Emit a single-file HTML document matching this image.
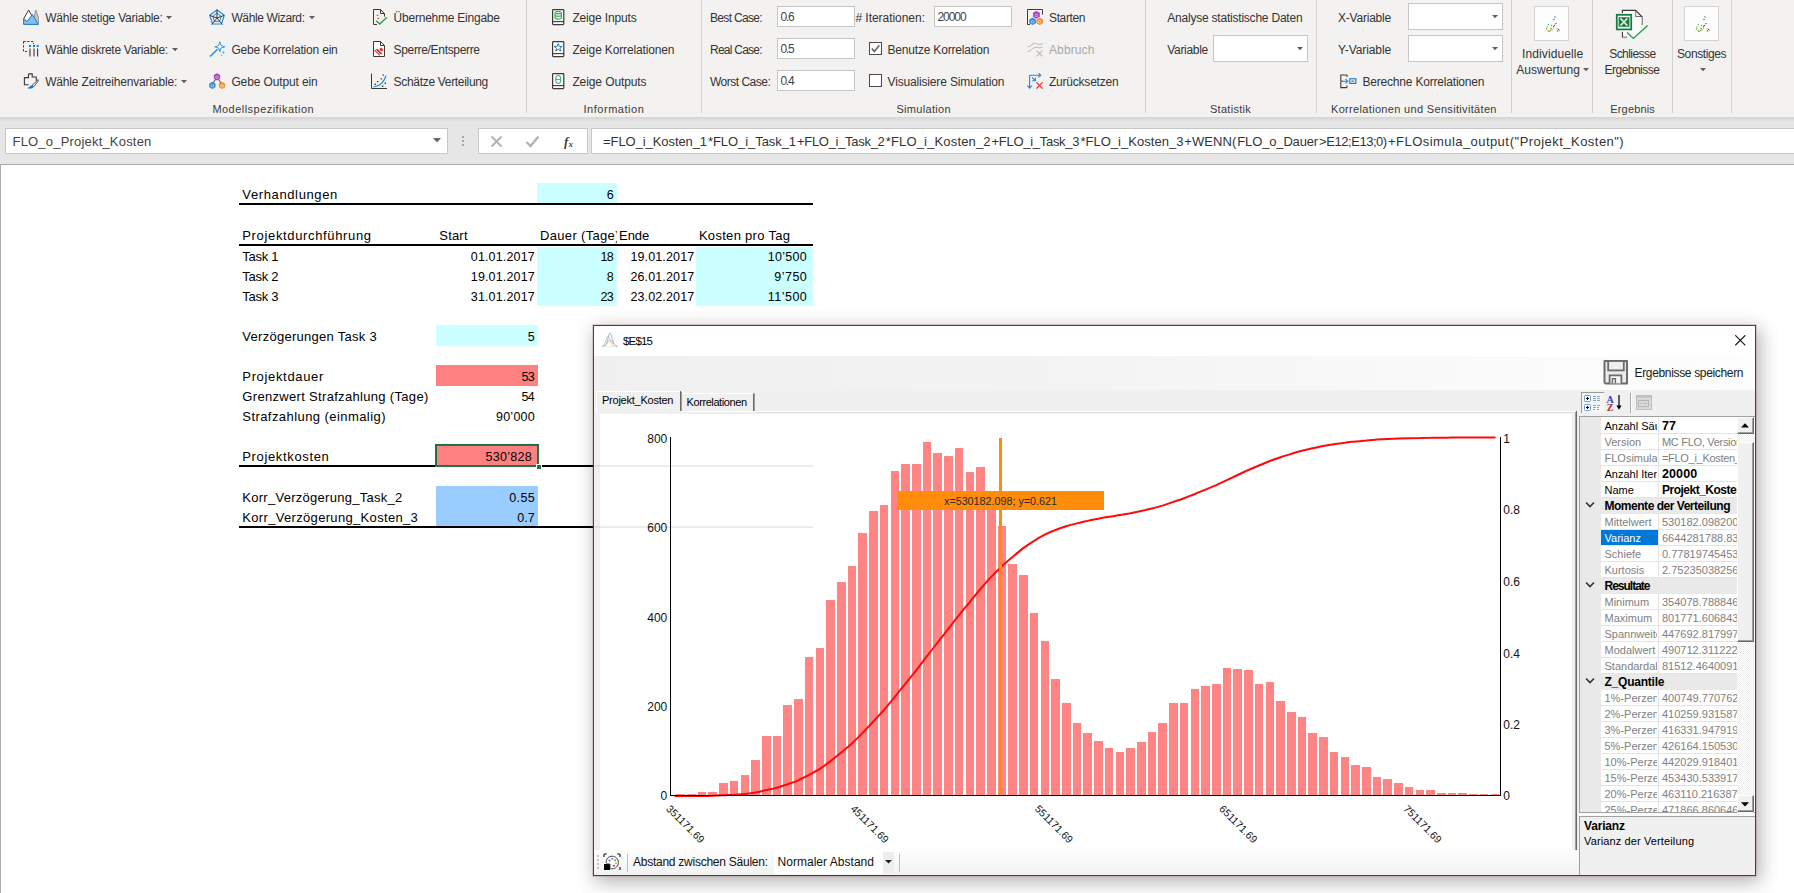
<!DOCTYPE html>
<html><head><meta charset="utf-8"><title>MC FLO</title>
<style>
html,body{margin:0;padding:0;}
body{width:1794px;height:893px;position:relative;overflow:hidden;background:#fff;font-family:"Liberation Sans",sans-serif;}
.t{position:absolute;white-space:pre;line-height:20px;font-family:"Liberation Sans",sans-serif;}
.r{position:absolute;box-sizing:border-box;}
</style></head><body>
<div class="r" style="left:0px;top:0px;width:1794px;height:117px;background:#f3f2f1;"></div>
<div class="r" style="left:0px;top:117px;width:1794px;height:47px;background:#e6e6e6;"></div>
<div class="r" style="left:0px;top:117px;width:1794px;height:5px;background:linear-gradient(#d4d4d4,#e6e6e6);"></div>
<div class="r" style="left:0px;top:164px;width:1794px;height:729px;background:#fff;border-top:1px solid #ababab;border-left:1px solid #ababab;"></div>
<div class="r" style="left:526px;top:0px;width:1px;height:113px;background:#d2d0ce;"></div>
<div class="r" style="left:701px;top:0px;width:1px;height:113px;background:#d2d0ce;"></div>
<div class="r" style="left:1145px;top:0px;width:1px;height:113px;background:#d2d0ce;"></div>
<div class="r" style="left:1316px;top:0px;width:1px;height:113px;background:#d2d0ce;"></div>
<div class="r" style="left:1511px;top:0px;width:1px;height:113px;background:#d2d0ce;"></div>
<div class="r" style="left:1592px;top:0px;width:1px;height:113px;background:#d2d0ce;"></div>
<div class="r" style="left:1672px;top:0px;width:1px;height:113px;background:#d2d0ce;"></div>
<div class="r" style="left:1731px;top:0px;width:1px;height:113px;background:#d2d0ce;"></div>
<span class="t" style="left:45.20px;top:8.00px;font-size:12px;color:#333333;letter-spacing:-0.219px;">Wähle stetige Variable:</span>
<svg class="r" style="left:165.5px;top:16px;" width="6" height="4" viewBox="0 0 6 4"><path d="M0 0H6L3 3.2Z" fill="#605e5c"/></svg>
<span class="t" style="left:45.20px;top:40.00px;font-size:12px;color:#333333;letter-spacing:-0.268px;">Wähle diskrete Variable:</span>
<svg class="r" style="left:171.7px;top:48px;" width="6" height="4" viewBox="0 0 6 4"><path d="M0 0H6L3 3.2Z" fill="#605e5c"/></svg>
<span class="t" style="left:45.20px;top:72.00px;font-size:12px;color:#333333;letter-spacing:-0.165px;">Wähle Zeitreihenvariable:</span>
<svg class="r" style="left:180.8px;top:80px;" width="6" height="4" viewBox="0 0 6 4"><path d="M0 0H6L3 3.2Z" fill="#605e5c"/></svg>
<span class="t" style="left:231.40px;top:8.00px;font-size:12px;color:#333333;letter-spacing:-0.368px;">Wähle Wizard:</span>
<svg class="r" style="left:309px;top:16px;" width="6" height="4" viewBox="0 0 6 4"><path d="M0 0H6L3 3.2Z" fill="#605e5c"/></svg>
<span class="t" style="left:231.40px;top:40.00px;font-size:12px;color:#333333;letter-spacing:-0.193px;">Gebe Korrelation ein</span>
<span class="t" style="left:231.40px;top:72.00px;font-size:12px;color:#333333;letter-spacing:-0.126px;">Gebe Output ein</span>
<span class="t" style="left:393.60px;top:8.00px;font-size:12px;color:#333333;letter-spacing:-0.230px;">Übernehme Eingabe</span>
<span class="t" style="left:393.60px;top:40.00px;font-size:12px;color:#333333;letter-spacing:-0.332px;">Sperre/Entsperre</span>
<span class="t" style="left:393.60px;top:72.00px;font-size:12px;color:#333333;letter-spacing:-0.316px;">Schätze Verteilung</span>
<span class="t" style="left:212.40px;top:99.00px;font-size:11px;color:#3a3a3a;letter-spacing:0.465px;">Modellspezifikation</span>
<span class="t" style="left:572.40px;top:8.00px;font-size:12px;color:#333333;letter-spacing:-0.158px;">Zeige Inputs</span>
<span class="t" style="left:572.40px;top:40.00px;font-size:12px;color:#333333;letter-spacing:-0.146px;">Zeige Korrelationen</span>
<span class="t" style="left:572.40px;top:72.00px;font-size:12px;color:#333333;letter-spacing:-0.098px;">Zeige Outputs</span>
<span class="t" style="left:583.50px;top:99.00px;font-size:11px;color:#3a3a3a;letter-spacing:0.527px;">Information</span>
<span class="t" style="left:710.00px;top:8.00px;font-size:12px;color:#333333;letter-spacing:-0.677px;">Best Case:</span>
<span class="t" style="left:710.00px;top:40.00px;font-size:12px;color:#333333;letter-spacing:-0.751px;">Real Case:</span>
<span class="t" style="left:710.00px;top:72.00px;font-size:12px;color:#333333;letter-spacing:-0.500px;">Worst Case:</span>
<div class="r" style="left:777px;top:6px;width:78px;height:21px;background:#fff;border:1px solid #c6c6c6;"></div>
<span class="t" style="left:780.40px;top:7.00px;font-size:12px;color:#444;letter-spacing:-1.191px;">0.6</span>
<div class="r" style="left:777px;top:38px;width:78px;height:21px;background:#fff;border:1px solid #c6c6c6;"></div>
<span class="t" style="left:780.40px;top:39.00px;font-size:12px;color:#444;letter-spacing:-1.191px;">0.5</span>
<div class="r" style="left:777px;top:70px;width:78px;height:21px;background:#fff;border:1px solid #c6c6c6;"></div>
<span class="t" style="left:780.40px;top:71.00px;font-size:12px;color:#444;letter-spacing:-1.191px;">0.4</span>
<span class="t" style="left:855.40px;top:8.00px;font-size:12px;color:#333333;letter-spacing:-0.035px;"># Iterationen:</span>
<div class="r" style="left:934px;top:6px;width:78px;height:21px;background:#fff;border:1px solid #c6c6c6;"></div>
<span class="t" style="left:937.40px;top:7.00px;font-size:12px;color:#444;letter-spacing:-1.018px;">20000</span>
<div class="r" style="left:869px;top:42px;width:13px;height:13px;background:#fff;border:1px solid #4a4a4a;"></div>
<svg class="r" style="left:869px;top:42px;" width="13" height="13" viewBox="0 0 13 13"><path d="M2.8 6.6L5.4 9.4L10.3 3.2" fill="none" stroke="#666" stroke-width="1.6"/></svg>
<span class="t" style="left:887.50px;top:40.00px;font-size:12px;color:#333333;letter-spacing:-0.189px;">Benutze Korrelation</span>
<div class="r" style="left:869px;top:74px;width:13px;height:13px;background:#fff;border:1px solid #4a4a4a;"></div>
<span class="t" style="left:887.50px;top:72.00px;font-size:12px;color:#333333;letter-spacing:-0.160px;">Visualisiere Simulation</span>
<span class="t" style="left:1049.00px;top:8.00px;font-size:12px;color:#333333;letter-spacing:-0.365px;">Starten</span>
<span class="t" style="left:1049.00px;top:40.00px;font-size:12px;color:#a8a8a8;letter-spacing:0.117px;">Abbruch</span>
<span class="t" style="left:1049.00px;top:72.00px;font-size:12px;color:#333333;letter-spacing:-0.221px;">Zurücksetzen</span>
<span class="t" style="left:896.40px;top:99.00px;font-size:11px;color:#3a3a3a;letter-spacing:0.315px;">Simulation</span>
<span class="t" style="left:1167.30px;top:8.00px;font-size:12px;color:#333333;letter-spacing:-0.218px;">Analyse statistische Daten</span>
<span class="t" style="left:1167.30px;top:40.00px;font-size:12px;color:#333333;letter-spacing:-0.320px;">Variable</span>
<div class="r" style="left:1213px;top:35px;width:95px;height:27px;background:#fff;border:1px solid #c6c6c6;"></div>
<svg class="r" style="left:1297.4px;top:47px;" width="6" height="4" viewBox="0 0 6 4"><path d="M0 0H6L3 3.2Z" fill="#605e5c"/></svg>
<span class="t" style="left:1210.00px;top:99.00px;font-size:11px;color:#3a3a3a;letter-spacing:0.286px;">Statistik</span>
<span class="t" style="left:1338.00px;top:8.00px;font-size:12px;color:#333333;letter-spacing:-0.216px;">X-Variable</span>
<span class="t" style="left:1338.00px;top:40.00px;font-size:12px;color:#333333;letter-spacing:-0.093px;">Y-Variable</span>
<div class="r" style="left:1408px;top:3px;width:95px;height:27px;background:#fff;border:1px solid #c6c6c6;"></div>
<svg class="r" style="left:1492.4px;top:15px;" width="6" height="4" viewBox="0 0 6 4"><path d="M0 0H6L3 3.2Z" fill="#605e5c"/></svg>
<div class="r" style="left:1408px;top:35px;width:95px;height:27px;background:#fff;border:1px solid #c6c6c6;"></div>
<svg class="r" style="left:1492.4px;top:47px;" width="6" height="4" viewBox="0 0 6 4"><path d="M0 0H6L3 3.2Z" fill="#605e5c"/></svg>
<span class="t" style="left:1362.40px;top:72.00px;font-size:12px;color:#333333;letter-spacing:-0.190px;">Berechne Korrelationen</span>
<span class="t" style="left:1331.00px;top:99.00px;font-size:11px;color:#3a3a3a;letter-spacing:0.328px;">Korrelationen und Sensitivitäten</span>
<div class="r" style="left:1534px;top:6px;width:35px;height:35px;background:#fdfdfd;border:1px solid #d6d4d2;"></div>
<span class="t" style="left:1522.00px;top:44.00px;font-size:12px;color:#333333;letter-spacing:0.114px;">Individuelle</span>
<span class="t" style="left:1516.20px;top:60.00px;font-size:12px;color:#333333;letter-spacing:0.048px;">Auswertung</span>
<svg class="r" style="left:1582.5px;top:68px;" width="6" height="4" viewBox="0 0 6 4"><path d="M0 0H6L3 3.2Z" fill="#605e5c"/></svg>
<span class="t" style="left:1609.20px;top:44.00px;font-size:12px;color:#333333;letter-spacing:-0.545px;">Schliesse</span>
<span class="t" style="left:1604.50px;top:60.00px;font-size:12px;color:#333333;letter-spacing:-0.515px;">Ergebnisse</span>
<span class="t" style="left:1610.30px;top:99.00px;font-size:11px;color:#3a3a3a;letter-spacing:0.155px;">Ergebnis</span>
<div class="r" style="left:1684px;top:6px;width:35px;height:35px;background:#fdfdfd;border:1px solid #d6d4d2;"></div>
<span class="t" style="left:1677.00px;top:44.00px;font-size:12px;color:#333333;letter-spacing:-0.388px;">Sonstiges</span>
<svg class="r" style="left:1699.5px;top:68px;" width="6" height="4" viewBox="0 0 6 4"><path d="M0 0H6L3 3.2Z" fill="#605e5c"/></svg>
<div class="r" style="left:5px;top:128px;width:443px;height:26px;background:#fff;border:1px solid #c8c8c8;"></div>
<span class="t" style="left:12.50px;top:131.50px;font-size:13px;color:#444;letter-spacing:0.193px;">FLO_o_Projekt_Kosten</span>
<svg class="r" style="left:433px;top:138px;" width="8" height="5" viewBox="0 0 8 5"><path d="M0 0H8L4 4.4Z" fill="#666"/></svg>
<div class="r" style="left:462px;top:136px;width:2px;height:2px;background:#a6a6a6;"></div>
<div class="r" style="left:462px;top:140px;width:2px;height:2px;background:#a6a6a6;"></div>
<div class="r" style="left:462px;top:144px;width:2px;height:2px;background:#a6a6a6;"></div>
<div class="r" style="left:478px;top:128px;width:110px;height:26px;background:#fff;border:1px solid #c8c8c8;"></div>
<svg class="r" style="left:490px;top:135px;" width="13" height="13" viewBox="0 0 13 13"><path d="M1.5 1.5L11.5 11.5M11.5 1.5L1.5 11.5" stroke="#b2b2b2" stroke-width="1.9" fill="none"/></svg>
<svg class="r" style="left:525px;top:135px;" width="15" height="13" viewBox="0 0 15 13"><path d="M1.5 7L5.5 11L13.5 1.5" stroke="#b2b2b2" stroke-width="2.3" fill="none"/></svg>
<span class="t" style="left:564.00px;top:131.50px;font-size:13px;color:#444;font-weight:bold;font-family:'Liberation Serif',serif;font-style:italic;">f</span>
<span class="t" style="left:568.50px;top:134.00px;font-size:9px;color:#444;font-weight:bold;font-family:'Liberation Serif',serif;font-style:italic;">x</span>
<div class="r" style="left:591px;top:128px;width:1210px;height:26px;background:#fff;border:1px solid #c8c8c8;"></div>
<span class="t" style="left:603.10px;top:131.50px;font-size:13px;color:#333;letter-spacing:-0.083px;">=FLO_i_Kosten_1</span>
<span class="t" style="left:708.00px;top:131.50px;font-size:13px;color:#333;letter-spacing:-0.065px;">*FLO_i_Task_1</span>
<span class="t" style="left:797.00px;top:131.50px;font-size:13px;color:#333;letter-spacing:-0.301px;">+FLO_i_Task_2</span>
<span class="t" style="left:885.70px;top:131.50px;font-size:13px;color:#333;letter-spacing:0.163px;">*FLO_i_Kosten_2</span>
<span class="t" style="left:991.50px;top:131.50px;font-size:13px;color:#333;letter-spacing:-0.285px;">+FLO_i_Task_3</span>
<span class="t" style="left:1080.40px;top:131.50px;font-size:13px;color:#333;letter-spacing:0.027px;">*FLO_i_Kosten_3</span>
<span class="t" style="left:1184.30px;top:131.50px;font-size:13px;color:#333;letter-spacing:0.092px;">+WENN(</span>
<span class="t" style="left:1237.30px;top:131.50px;font-size:13px;color:#333;letter-spacing:-0.148px;">FLO_o_Dauer</span>
<span class="t" style="left:1319.10px;top:131.50px;font-size:13px;color:#333;letter-spacing:-0.454px;">&gt;E12;E13;0)</span>
<span class="t" style="left:1388.10px;top:131.50px;font-size:13px;color:#333;letter-spacing:0.436px;">+FLOsimula_output</span>
<span class="t" style="left:1509.80px;top:131.50px;font-size:13px;color:#333;letter-spacing:0.461px;">("Projekt_Kosten")</span>
<div class="r" style="left:537px;top:183px;width:80px;height:21px;background:#ccffff;"></div>
<div class="r" style="left:537px;top:247px;width:80px;height:59px;background:#ccffff;"></div>
<div class="r" style="left:696px;top:247px;width:117px;height:59px;background:#ccffff;"></div>
<div class="r" style="left:436px;top:325px;width:102px;height:21px;background:#ccffff;"></div>
<div class="r" style="left:436px;top:365px;width:102px;height:21px;background:#ff8080;"></div>
<div class="r" style="left:436px;top:445px;width:102px;height:21px;background:#ff8080;"></div>
<div class="r" style="left:436px;top:486px;width:102px;height:40px;background:#99ccff;"></div>
<div class="r" style="left:239px;top:203px;width:574px;height:2px;background:#000;"></div>
<div class="r" style="left:239px;top:244px;width:574px;height:2px;background:#000;"></div>
<div class="r" style="left:239px;top:465px;width:360px;height:2px;background:#000;"></div>
<div class="r" style="left:239px;top:526px;width:360px;height:2px;background:#000;"></div>
<div class="r" style="left:435px;top:444px;width:104px;height:23px;border:2px solid #217346;"></div>
<div class="r" style="left:536px;top:464px;width:6px;height:6px;background:#217346;border:1px solid #fff;"></div>
<span class="t" style="left:242.30px;top:184.50px;font-size:13px;color:#000;letter-spacing:0.627px;">Verhandlungen</span>
<span class="t" style="left:606.65px;top:185.00px;font-size:12.5px;color:#000;">6</span>
<span class="t" style="left:242.30px;top:225.50px;font-size:13px;color:#000;letter-spacing:0.646px;">Projektdurchführung</span>
<span class="t" style="left:439.30px;top:225.50px;font-size:13px;color:#000;letter-spacing:0.186px;">Start</span>
<div class="r" style="left:540px;top:225px;width:76.5px;height:20px;overflow:hidden">
<span class="t" style="left:0.00px;top:0.50px;font-size:13px;color:#000;letter-spacing:0.330px;">Dauer (Tage)</span>
</div>
<span class="t" style="left:619.00px;top:225.50px;font-size:13px;color:#000;letter-spacing:-0.021px;">Ende</span>
<span class="t" style="left:698.90px;top:225.50px;font-size:13px;color:#000;letter-spacing:0.299px;">Kosten pro Tag</span>
<span class="t" style="left:242.30px;top:246.50px;font-size:13px;color:#000;letter-spacing:-0.274px;">Task 1</span>
<span class="t" style="left:470.80px;top:247.00px;font-size:12.5px;color:#000;letter-spacing:0.149px;">01.01.2017</span>
<span class="t" style="left:600.40px;top:247.00px;font-size:12.5px;color:#000;letter-spacing:-0.704px;">18</span>
<span class="t" style="left:630.40px;top:247.00px;font-size:12.5px;color:#000;letter-spacing:0.137px;">19.01.2017</span>
<span class="t" style="left:767.70px;top:247.00px;font-size:12.5px;color:#000;letter-spacing:0.312px;">10’500</span>
<span class="t" style="left:242.30px;top:266.50px;font-size:13px;color:#000;letter-spacing:-0.274px;">Task 2</span>
<span class="t" style="left:470.80px;top:267.00px;font-size:12.5px;color:#000;letter-spacing:0.149px;">19.01.2017</span>
<span class="t" style="left:606.65px;top:267.00px;font-size:12.5px;color:#000;">8</span>
<span class="t" style="left:630.40px;top:267.00px;font-size:12.5px;color:#000;letter-spacing:0.137px;">26.01.2017</span>
<span class="t" style="left:774.30px;top:267.00px;font-size:12.5px;color:#000;letter-spacing:0.479px;">9’750</span>
<span class="t" style="left:242.30px;top:286.50px;font-size:13px;color:#000;letter-spacing:-0.274px;">Task 3</span>
<span class="t" style="left:470.80px;top:287.00px;font-size:12.5px;color:#000;letter-spacing:0.149px;">31.01.2017</span>
<span class="t" style="left:600.40px;top:287.00px;font-size:12.5px;color:#000;letter-spacing:-0.704px;">23</span>
<span class="t" style="left:630.40px;top:287.00px;font-size:12.5px;color:#000;letter-spacing:0.137px;">23.02.2017</span>
<span class="t" style="left:767.70px;top:287.00px;font-size:12.5px;color:#000;letter-spacing:0.498px;">11’500</span>
<span class="t" style="left:242.30px;top:326.50px;font-size:13px;color:#000;letter-spacing:0.277px;">Verzögerungen Task 3</span>
<span class="t" style="left:527.75px;top:327.00px;font-size:12.5px;color:#000;">5</span>
<span class="t" style="left:242.30px;top:366.50px;font-size:13px;color:#000;letter-spacing:0.663px;">Projektdauer</span>
<span class="t" style="left:521.50px;top:367.00px;font-size:12.5px;color:#000;letter-spacing:-0.704px;">53</span>
<span class="t" style="left:242.30px;top:386.50px;font-size:13px;color:#000;letter-spacing:0.320px;">Grenzwert Strafzahlung (Tage)</span>
<span class="t" style="left:521.50px;top:387.00px;font-size:12.5px;color:#000;letter-spacing:-0.704px;">54</span>
<span class="t" style="left:242.30px;top:406.50px;font-size:13px;color:#000;letter-spacing:0.433px;">Strafzahlung (einmalig)</span>
<span class="t" style="left:496.00px;top:407.00px;font-size:12.5px;color:#000;letter-spacing:0.232px;">90’000</span>
<span class="t" style="left:242.30px;top:446.50px;font-size:13px;color:#000;letter-spacing:0.645px;">Projektkosten</span>
<span class="t" style="left:485.50px;top:447.00px;font-size:12.5px;color:#000;letter-spacing:0.285px;">530’828</span>
<span class="t" style="left:242.30px;top:487.50px;font-size:13px;color:#000;letter-spacing:0.276px;">Korr_Verzögerung_Task_2</span>
<span class="t" style="left:509.20px;top:488.00px;font-size:12.5px;color:#000;letter-spacing:0.390px;">0.55</span>
<span class="t" style="left:242.30px;top:507.50px;font-size:13px;color:#000;letter-spacing:0.326px;">Korr_Verzögerung_Kosten_3</span>
<span class="t" style="left:517.20px;top:508.00px;font-size:12.5px;color:#000;letter-spacing:0.062px;">0.7</span>
<div class="r" style="left:593px;top:325px;width:1163px;height:551px;background:#f0f0f0;border:1px solid #742c2c;box-shadow:0 0 0 1px rgba(116,44,44,0.16),3px 5px 18px 1px rgba(0,0,0,0.31);"></div>
<div class="r" style="left:594px;top:326px;width:1161px;height:30px;background:#fff;"></div>
<div class="r" style="left:594px;top:356px;width:1161px;height:34px;background:linear-gradient(90deg,#f0f0f0 0%,#f3f3f3 40%,#fbfbfb 80%,#fdfdfd 100%);"></div>
<span class="t" style="left:623.00px;top:331.00px;font-size:11.5px;color:#000;letter-spacing:-0.814px;">$E$15</span>
<svg class="r" style="left:601px;top:331px;" width="18" height="18" viewBox="0 0 18 18"><path opacity="0.8" d="M1 15C5 15 5 5 7 5S9 15 13 15" fill="none" stroke="#9bd19b" stroke-width="0.9"/><path d="M3 15C7 15 7 2 9 2S11 15 16 15" fill="none" stroke="#9aa8d8" stroke-width="0.9"/><path d="M1 15.5C6 15 7 9 9 9S12 15 17 15.5" fill="none" stroke="#e8a0a0" stroke-width="0.9"/><path d="M1 16H17" stroke="#ddd" stroke-width="0.6"/></svg>
<svg class="r" style="left:1735px;top:335px;" width="11" height="11" viewBox="0 0 11 11"><path d="M0.3 0.3L10.3 10.3M10.3 0.3L0.3 10.3" stroke="#111" stroke-width="1.1" fill="none"/></svg>
<svg class="r" style="left:1602px;top:359px;" width="27" height="27" viewBox="0 0 27 27"><path d="M2.5 2V23.4L3.6 24.6H25V2Z" fill="#ebebeb" stroke="#6c6c6c" stroke-width="2" stroke-linejoin="round"/><rect x="6.2" y="2" width="15.6" height="9.4" fill="#efeff3" stroke="#6c6c6c" stroke-width="1.8"/><path d="M7.6 24.4V16.4H19.4V24.4" fill="#f4f4f4" stroke="#6c6c6c" stroke-width="1.8"/><path d="M10.4 24.4V19.6H13.4V24.4" fill="none" stroke="#6c6c6c" stroke-width="1.4"/></svg>
<span class="t" style="left:1634.50px;top:363.00px;font-size:12px;color:#1a1a1a;letter-spacing:-0.337px;">Ergebnisse speichern</span>
<div class="r" style="left:596px;top:411px;width:980px;height:1px;background:#fff;"></div>
<div class="r" style="left:754px;top:412px;width:822px;height:1px;background:#e3e3e3;"></div>
<div class="r" style="left:596px;top:391px;width:84px;height:21px;background:#f0f0f0;border-top:1px solid #fff;border-left:1px solid #fff;"></div>
<div class="r" style="left:680px;top:391px;width:1px;height:20px;background:#696969;"></div>
<div class="r" style="left:681px;top:392px;width:1px;height:19px;background:#a0a0a0;"></div>
<div class="r" style="left:682px;top:393px;width:72px;height:18px;background:#f0f0f0;border-top:1px solid #fff;border-right:1px solid #696969;box-shadow:1px 0 0 #a0a0a0;"></div>
<span class="t" style="left:602.00px;top:390.00px;font-size:11px;color:#000;letter-spacing:-0.239px;">Projekt_Kosten</span>
<span class="t" style="left:686.50px;top:392.00px;font-size:11px;color:#000;letter-spacing:-0.411px;">Korrelationen</span>
<div class="r" style="left:1575px;top:412px;width:1px;height:438px;background:#a0a0a0;"></div>
<div class="r" style="left:1576px;top:411px;width:1px;height:440px;background:#696969;"></div>
<div class="r" style="left:600px;top:414px;width:972px;height:436px;background:#fff;"></div>
<div class="r" style="left:594px;top:850px;width:985px;height:25px;background:linear-gradient(#fdfdfd,#f2f2f2);"></div>
<div class="r" style="left:597px;top:855px;width:2px;height:2px;background:#c4c4c4;"></div>
<div class="r" style="left:597px;top:859px;width:2px;height:2px;background:#c4c4c4;"></div>
<div class="r" style="left:597px;top:863px;width:2px;height:2px;background:#c4c4c4;"></div>
<div class="r" style="left:597px;top:867px;width:2px;height:2px;background:#c4c4c4;"></div>
<div class="r" style="left:627px;top:854px;width:1px;height:18px;background:#c0c0c0;"></div>
<span class="t" style="left:633.00px;top:852.00px;font-size:12px;color:#111;letter-spacing:-0.250px;">Abstand zwischen Säulen:</span>
<div class="r" style="left:774px;top:851px;width:109px;height:23px;background:#fff;"></div>
<span class="t" style="left:777.50px;top:852.00px;font-size:12px;color:#111;letter-spacing:0.030px;">Normaler Abstand</span>
<div class="r" style="left:883px;top:852px;width:11px;height:21px;background:#ededed;"></div>
<svg class="r" style="left:885px;top:860px;" width="7" height="4" viewBox="0 0 7 4"><path d="M0 0H7L3.5 3.6Z" fill="#222"/></svg>
<div class="r" style="left:899px;top:854px;width:1px;height:18px;background:#c0c0c0;"></div>
<svg class="r" style="left:603px;top:853px;" width="18" height="18" viewBox="0 0 18 18"><path d="M1 1H4M1 1V4M17 1H14M17 1V4M17 17V14" stroke="#222" stroke-width="1.2" fill="none"/><rect x="1" y="11" width="6" height="6" fill="#000"/><path d="M9 3.2C5.4 3.2 3.2 5.8 3.2 8.8C3.2 10.2 4 11 5.2 11H7V14.6C7 15.4 7.8 15.8 9 15.8C12.6 15.8 15.4 13 15.4 9.4C15.4 5.8 12.6 3.2 9 3.2Z" fill="#fafafa" stroke="#333" stroke-width="0.9"/><circle cx="6.5" cy="7.5" r="1" fill="#8a4fd8"/><circle cx="9.3" cy="5.8" r="1" fill="#2e8be6"/><circle cx="12.2" cy="7.2" r="1" fill="#3cb44b"/><circle cx="13" cy="10.2" r="1" fill="#f5a623"/><circle cx="11" cy="12.8" r="1" fill="#e6332a"/></svg>
<svg class="r" style="left:600px;top:414px;font-family:'Liberation Sans',sans-serif" width="972" height="436" viewBox="600 414 972 436"><path d="M676 794H685V795H676ZM687 794H696V795H687ZM698 792H706V795H698ZM708 792H717V795H708ZM719 783H728V795H719ZM730 781H738V795H730ZM741 775H749V795H741ZM751 760H760V795H751ZM762 736H771V795H762ZM773 736H781V795H773ZM783 705H792V795H783ZM794 699H803V795H794ZM805 657H813V795H805ZM816 648H824V795H816ZM826 600H835V795H826ZM837 582H846V795H837ZM848 566H856V795H848ZM858 533H867V795H858ZM869 511H878V795H869ZM880 505H888V795H880ZM891 471H899V795H891ZM901 464H910V795H901ZM912 464H921V795H912ZM923 442H931V795H923ZM933 453H942V795H933ZM944 456H953V795H944ZM955 448H963V795H955ZM966 472H974V795H966ZM976 467H985V795H976ZM987 495H996V795H987ZM998 526H1006V795H998ZM1008 564H1017V795H1008ZM1019 575H1028V795H1019ZM1030 613H1038V795H1030ZM1041 641H1049V795H1041ZM1051 679H1060V795H1051ZM1062 703H1071V795H1062ZM1073 723H1081V795H1073ZM1083 733H1092V795H1083ZM1094 741H1103V795H1094ZM1105 748H1113V795H1105ZM1116 752H1124V795H1116ZM1126 748H1135V795H1126ZM1137 742H1146V795H1137ZM1148 732H1156V795H1148ZM1158 723H1167V795H1158ZM1169 703H1178V795H1169ZM1180 703H1188V795H1180ZM1191 689H1199V795H1191ZM1201 686H1210V795H1201ZM1212 684H1221V795H1212ZM1223 668H1231V795H1223ZM1233 669H1242V795H1233ZM1244 670H1253V795H1244ZM1255 684H1263V795H1255ZM1266 682H1274V795H1266ZM1276 701H1285V795H1276ZM1287 712H1296V795H1287ZM1298 717H1306V795H1298ZM1308 733H1317V795H1308ZM1319 737H1328V795H1319ZM1330 752H1338V795H1330ZM1341 757H1349V795H1341ZM1351 765H1360V795H1351ZM1362 767H1371V795H1362ZM1373 777H1381V795H1373ZM1383 779H1392V795H1383ZM1394 783H1403V795H1394ZM1405 787H1413V795H1405ZM1416 790H1424V795H1416ZM1426 790H1435V795H1426ZM1437 793H1446V795H1437ZM1448 793H1456V795H1448ZM1458 793H1467V795H1458ZM1469 794H1478V795H1469ZM1480 794H1488V795H1480ZM1491 794H1499V795H1491Z" fill="#ff8585" shape-rendering="crispEdges"/><path d="M675.5 796.2C676.3 796.2 677.9 796.2 680.5 796.1C683.1 796.1 687.6 796.1 691.2 796.1C694.8 796.1 698.3 796.0 701.9 796.0C705.5 795.9 709.1 795.9 712.6 795.8C716.2 795.7 719.8 795.5 723.3 795.3C726.9 795.1 730.5 795.0 734.1 794.8C737.6 794.5 741.2 794.3 744.8 793.9C748.3 793.6 751.9 793.2 755.5 792.5C759.1 791.9 762.6 790.9 766.2 790.1C769.8 789.4 773.3 788.8 776.9 787.8C780.5 786.8 784.1 785.4 787.6 784.2C791.2 782.9 794.8 781.9 798.3 780.3C801.9 778.7 805.5 776.7 809.1 774.8C812.6 772.9 816.2 771.2 819.8 768.9C823.3 766.6 826.9 763.8 830.5 761.1C834.1 758.3 837.6 755.5 841.2 752.5C844.8 749.6 848.3 746.6 851.9 743.4C855.5 740.1 859.1 736.5 862.6 732.9C866.2 729.2 869.8 725.3 873.3 721.5C876.9 717.6 880.5 714.0 884.1 709.9C887.6 705.8 891.2 701.3 894.8 696.9C898.3 692.5 901.9 688.0 905.5 683.6C909.1 679.2 912.6 674.9 916.2 670.4C919.8 665.8 923.3 660.9 926.9 656.2C930.5 651.6 934.1 647.1 937.6 642.5C941.2 638.0 944.8 633.5 948.3 628.9C951.9 624.4 955.5 619.5 959.1 615.0C962.6 610.6 966.2 606.4 969.8 602.1C973.3 597.8 976.9 593.1 980.5 589.0C984.1 584.8 987.6 580.7 991.2 576.9C994.8 573.1 998.3 569.5 1001.9 566.2C1005.5 562.8 1009.1 559.9 1012.6 556.9C1016.2 553.9 1019.8 550.8 1023.3 548.1C1026.9 545.4 1030.5 543.0 1034.1 540.8C1037.6 538.5 1041.2 536.4 1044.8 534.6C1048.3 532.8 1051.9 531.3 1055.5 530.0C1059.1 528.6 1062.6 527.4 1066.2 526.3C1069.8 525.2 1073.3 524.3 1076.9 523.4C1080.5 522.5 1084.1 521.7 1087.6 520.9C1091.2 520.1 1094.8 519.4 1098.3 518.7C1101.9 518.0 1105.5 517.4 1109.1 516.8C1112.6 516.2 1116.2 515.7 1119.8 515.1C1123.3 514.5 1126.9 513.8 1130.5 513.2C1134.1 512.5 1137.6 511.8 1141.2 511.0C1144.8 510.3 1148.3 509.4 1151.9 508.5C1155.5 507.6 1159.1 506.7 1162.6 505.6C1166.2 504.5 1169.8 503.2 1173.3 501.9C1176.9 500.7 1180.5 499.6 1184.1 498.2C1187.6 496.9 1191.2 495.4 1194.8 494.0C1198.3 492.5 1201.9 491.1 1205.5 489.6C1209.1 488.1 1212.6 486.7 1216.2 485.2C1219.8 483.6 1223.3 481.7 1226.9 480.1C1230.5 478.4 1234.1 476.7 1237.6 475.0C1241.2 473.3 1244.8 471.6 1248.3 470.0C1251.9 468.4 1255.5 467.0 1259.1 465.5C1262.6 464.0 1266.2 462.4 1269.8 461.0C1273.3 459.6 1276.9 458.4 1280.5 457.2C1284.1 456.0 1287.6 455.0 1291.2 453.9C1294.8 452.8 1298.3 451.7 1301.9 450.8C1305.5 449.8 1309.1 449.1 1312.6 448.3C1316.2 447.5 1319.8 446.6 1323.3 445.9C1326.9 445.3 1330.5 444.8 1334.1 444.2C1337.6 443.7 1341.2 443.1 1344.8 442.7C1348.3 442.2 1351.9 441.9 1355.5 441.5C1359.1 441.1 1362.6 440.7 1366.2 440.4C1369.8 440.0 1373.3 439.9 1376.9 439.6C1380.5 439.4 1384.1 439.2 1387.6 439.0C1391.2 438.8 1394.8 438.6 1398.3 438.5C1401.9 438.4 1405.5 438.3 1409.1 438.2C1412.6 438.1 1416.2 438.0 1419.8 438.0C1423.3 437.9 1426.9 437.8 1430.5 437.8C1434.1 437.7 1437.6 437.7 1441.2 437.7C1444.8 437.7 1448.3 437.6 1451.9 437.6C1455.5 437.6 1459.1 437.5 1462.6 437.5C1466.2 437.5 1469.8 437.5 1473.3 437.5C1476.9 437.5 1480.5 437.5 1484.1 437.4C1487.6 437.4 1493.0 437.4 1494.8 437.4" fill="none" stroke="#ff0a0a" stroke-width="2" stroke-linecap="round"/><path d="M670.5 437V795.5M670 795.5H1501M1500.5 437V796" stroke="#000" stroke-width="1" fill="none" shape-rendering="crispEdges"/><rect x="999" y="438" width="3" height="357" fill="#ff8c0a"/><rect x="897" y="491" width="207" height="19" fill="#ff8c0a"/><text x="1000.5" y="504.6" font-size="11" text-anchor="middle" fill="#2a2a2a" textLength="113" lengthAdjust="spacingAndGlyphs">x=530182.098; y=0.621</text><text x="667.3" y="443.3" font-size="12" text-anchor="end" fill="#111">800</text><text x="667.3" y="531.8" font-size="12" text-anchor="end" fill="#111">600</text><text x="667.3" y="622.0" font-size="12" text-anchor="end" fill="#111">400</text><text x="667.3" y="711.3" font-size="12" text-anchor="end" fill="#111">200</text><text x="667.3" y="800.3" font-size="12" text-anchor="end" fill="#111">0</text><text x="1503.3" y="443.3" font-size="12" fill="#111">1</text><text x="1503.3" y="514.3" font-size="12" fill="#111">0.8</text><text x="1503.3" y="586.3" font-size="12" fill="#111">0.6</text><text x="1503.3" y="657.8" font-size="12" fill="#111">0.4</text><text x="1503.3" y="729.3" font-size="12" fill="#111">0.2</text><text x="1503.3" y="799.9" font-size="12" fill="#111">0</text><text transform="translate(665.6 809.4) rotate(45)" x="0" y="0" font-size="10.5" fill="#111">351171.69</text><text transform="translate(849.9 809.4) rotate(45)" x="0" y="0" font-size="10.5" fill="#111">451171.69</text><text transform="translate(1034.2 809.4) rotate(45)" x="0" y="0" font-size="10.5" fill="#111">551171.69</text><text transform="translate(1218.5 809.4) rotate(45)" x="0" y="0" font-size="10.5" fill="#111">651171.69</text><text transform="translate(1402.8 809.4) rotate(45)" x="0" y="0" font-size="10.5" fill="#111">751171.69</text></svg>
<div class="r" style="left:594px;top:465px;width:219px;height:2px;background:rgba(0,0,0,0.075);"></div>
<div class="r" style="left:594px;top:526px;width:219px;height:2px;background:rgba(0,0,0,0.075);"></div>
<div class="r" style="left:1581px;top:392px;width:23px;height:21px;background:#f5f5f5;border-top:1px solid #9a9a9a;border-left:1px solid #9a9a9a;"></div>
<svg class="r" style="left:1583px;top:394px;" width="20" height="18" viewBox="0 0 20 18"><rect x="1.5" y="1.5" width="6" height="6" rx="1" fill="#fff" stroke="#6f9fd8" stroke-width="1"/><path d="M3.0 4.5H6.0M4.5 3.0V6.0" stroke="#000" stroke-width="1"/><rect x="1.5" y="10.5" width="6" height="6" rx="1" fill="#fff" stroke="#6f9fd8" stroke-width="1"/><path d="M3.0 13.5H6.0M4.5 12.0V15.0" stroke="#000" stroke-width="1"/><path d="M10 2.5H13M14 2.5H17M10 4.5H13M14 4.5H17M10 6.5H13M14 6.5H17M10 11.5H13M14 11.5H17M10 13.5H13M14 13.5H16M10 15.5H12M14 15.5H16" stroke="#8aa4c4" stroke-width="1"/></svg>
<span class="t" style="left:1606.50px;top:389.50px;font-size:10px;color:#2a3fb0;font-weight:bold;font-family:'Liberation Serif',serif;">A</span>
<span class="t" style="left:1606.80px;top:397.50px;font-size:10px;color:#a83232;font-weight:bold;font-family:'Liberation Serif',serif;">Z</span>
<svg class="r" style="left:1615px;top:394px;" width="8" height="17" viewBox="0 0 8 17"><path d="M4 1V14" stroke="#000" stroke-width="1.2"/><path d="M1.4 11.6H6.6L4 15.8Z" fill="#000"/></svg>
<div class="r" style="left:1630px;top:393px;width:1px;height:20px;background:#a8a8a8;"></div>
<div class="r" style="left:1631px;top:393px;width:1px;height:20px;background:#fff;"></div>
<svg class="r" style="left:1636px;top:395px;" width="16" height="15" viewBox="0 0 16 15"><rect x="0.5" y="0.5" width="15" height="14" fill="#d9d9d9" stroke="#bdbdbd"/><rect x="0.5" y="0.5" width="15" height="2.4" fill="#c4c4c4"/><rect x="2.5" y="5.5" width="10" height="6" fill="none" stroke="#b6b6b6"/><path d="M4 8.5H5.5M7 8.5H11" stroke="#bbb"/></svg>
<div class="r" style="left:1579px;top:416px;width:176px;height:397px;background:#fff;border-top:1px solid #a0a0a0;border-left:1px solid #a0a0a0;"></div>
<div class="r" style="left:1580px;top:417px;width:21px;height:396px;background:#e9e9e9;"></div>
<div class="r" style="left:1580px;top:417px;width:158px;height:396px;overflow:hidden">
<div class="r" style="left:21px;top:16px;width:137px;height:1px;background:#e4e4e4;"></div>
<div class="r" style="left:78px;top:1px;width:1px;height:16px;background:#e4e4e4;"></div>
<div class="r" style="left:21px;top:1px;width:56px;height:15px;overflow:hidden">
<span class="t" style="left:3.50px;top:-2.00px;font-size:11px;color:#000;">Anzahl Säulen</span>
</div>
<div class="r" style="left:79px;top:1px;width:79px;height:15px;overflow:hidden">
<span class="t" style="left:3.00px;top:-2.00px;font-size:12.5px;color:#000;font-weight:bold;letter-spacing:0.1px;">77</span>
</div>
<div class="r" style="left:21px;top:32px;width:137px;height:1px;background:#e4e4e4;"></div>
<div class="r" style="left:78px;top:17px;width:1px;height:16px;background:#e4e4e4;"></div>
<div class="r" style="left:21px;top:17px;width:56px;height:15px;overflow:hidden">
<span class="t" style="left:3.50px;top:-2.00px;font-size:11px;color:#808080;">Version</span>
</div>
<div class="r" style="left:79px;top:17px;width:79px;height:15px;overflow:hidden">
<span class="t" style="left:3.00px;top:-2.00px;font-size:11px;color:#808080;letter-spacing:-0.3px;">MC FLO, Version 5</span>
</div>
<div class="r" style="left:21px;top:48px;width:137px;height:1px;background:#e4e4e4;"></div>
<div class="r" style="left:78px;top:33px;width:1px;height:16px;background:#e4e4e4;"></div>
<div class="r" style="left:21px;top:33px;width:56px;height:15px;overflow:hidden">
<span class="t" style="left:3.50px;top:-2.00px;font-size:11px;color:#808080;">FLOsimula_output</span>
</div>
<div class="r" style="left:79px;top:33px;width:79px;height:15px;overflow:hidden">
<span class="t" style="left:3.00px;top:-2.00px;font-size:11px;color:#808080;letter-spacing:-0.3px;">=FLO_i_Kosten_1*F</span>
</div>
<div class="r" style="left:21px;top:64px;width:137px;height:1px;background:#e4e4e4;"></div>
<div class="r" style="left:78px;top:49px;width:1px;height:16px;background:#e4e4e4;"></div>
<div class="r" style="left:21px;top:49px;width:56px;height:15px;overflow:hidden">
<span class="t" style="left:3.50px;top:-2.00px;font-size:11px;color:#000;">Anzahl Iterationen</span>
</div>
<div class="r" style="left:79px;top:49px;width:79px;height:15px;overflow:hidden">
<span class="t" style="left:3.00px;top:-2.00px;font-size:12.5px;color:#000;font-weight:bold;letter-spacing:0.1px;">20000</span>
</div>
<div class="r" style="left:21px;top:80px;width:137px;height:1px;background:#e4e4e4;"></div>
<div class="r" style="left:78px;top:65px;width:1px;height:16px;background:#e4e4e4;"></div>
<div class="r" style="left:21px;top:65px;width:56px;height:15px;overflow:hidden">
<span class="t" style="left:3.50px;top:-2.00px;font-size:11px;color:#000;">Name</span>
</div>
<div class="r" style="left:79px;top:65px;width:79px;height:15px;overflow:hidden">
<span class="t" style="left:3.00px;top:-2.00px;font-size:12px;color:#000;font-weight:bold;letter-spacing:-0.5px;">Projekt_Kosten</span>
</div>
<div class="r" style="left:0px;top:81px;width:158px;height:16px;background:#e9e9e9;"></div>
<svg class="r" style="left:5px;top:84px;" width="10" height="8" viewBox="0 0 10 8"><path d="M1 1.5L5 5.5L9 1.5" fill="none" stroke="#333" stroke-width="1.6"/></svg>
<span class="t" style="left:24.50px;top:79.00px;font-size:12px;color:#000;letter-spacing:-0.478px;font-weight:bold;">Momente der Verteilung</span>
<div class="r" style="left:21px;top:112px;width:137px;height:1px;background:#e4e4e4;"></div>
<div class="r" style="left:78px;top:97px;width:1px;height:16px;background:#e4e4e4;"></div>
<div class="r" style="left:21px;top:97px;width:56px;height:15px;overflow:hidden">
<span class="t" style="left:3.50px;top:-2.00px;font-size:11px;color:#808080;">Mittelwert</span>
</div>
<div class="r" style="left:79px;top:97px;width:79px;height:15px;overflow:hidden">
<span class="t" style="left:3.00px;top:-2.00px;font-size:11px;color:#808080;">530182.098200</span>
</div>
<div class="r" style="left:21px;top:128px;width:137px;height:1px;background:#e4e4e4;"></div>
<div class="r" style="left:78px;top:113px;width:1px;height:16px;background:#e4e4e4;"></div>
<div class="r" style="left:21px;top:113px;width:57px;height:15px;background:#0078d7;"></div>
<div class="r" style="left:21px;top:113px;width:56px;height:15px;overflow:hidden">
<span class="t" style="left:3.50px;top:-2.00px;font-size:11px;color:#fff;">Varianz</span>
</div>
<div class="r" style="left:79px;top:113px;width:79px;height:15px;overflow:hidden">
<span class="t" style="left:3.00px;top:-2.00px;font-size:11px;color:#808080;">6644281788.83</span>
</div>
<div class="r" style="left:21px;top:144px;width:137px;height:1px;background:#e4e4e4;"></div>
<div class="r" style="left:78px;top:129px;width:1px;height:16px;background:#e4e4e4;"></div>
<div class="r" style="left:21px;top:129px;width:56px;height:15px;overflow:hidden">
<span class="t" style="left:3.50px;top:-2.00px;font-size:11px;color:#808080;">Schiefe</span>
</div>
<div class="r" style="left:79px;top:129px;width:79px;height:15px;overflow:hidden">
<span class="t" style="left:3.00px;top:-2.00px;font-size:11px;color:#808080;">0.77819745453</span>
</div>
<div class="r" style="left:21px;top:160px;width:137px;height:1px;background:#e4e4e4;"></div>
<div class="r" style="left:78px;top:145px;width:1px;height:16px;background:#e4e4e4;"></div>
<div class="r" style="left:21px;top:145px;width:56px;height:15px;overflow:hidden">
<span class="t" style="left:3.50px;top:-2.00px;font-size:11px;color:#808080;">Kurtosis</span>
</div>
<div class="r" style="left:79px;top:145px;width:79px;height:15px;overflow:hidden">
<span class="t" style="left:3.00px;top:-2.00px;font-size:11px;color:#808080;">2.75235038256</span>
</div>
<div class="r" style="left:0px;top:161px;width:158px;height:16px;background:#e9e9e9;"></div>
<svg class="r" style="left:5px;top:164px;" width="10" height="8" viewBox="0 0 10 8"><path d="M1 1.5L5 5.5L9 1.5" fill="none" stroke="#333" stroke-width="1.6"/></svg>
<span class="t" style="left:24.50px;top:159.00px;font-size:12px;color:#000;letter-spacing:-1.002px;font-weight:bold;">Resultate</span>
<div class="r" style="left:21px;top:192px;width:137px;height:1px;background:#e4e4e4;"></div>
<div class="r" style="left:78px;top:177px;width:1px;height:16px;background:#e4e4e4;"></div>
<div class="r" style="left:21px;top:177px;width:56px;height:15px;overflow:hidden">
<span class="t" style="left:3.50px;top:-2.00px;font-size:11px;color:#808080;">Minimum</span>
</div>
<div class="r" style="left:79px;top:177px;width:79px;height:15px;overflow:hidden">
<span class="t" style="left:3.00px;top:-2.00px;font-size:11px;color:#808080;">354078.788846</span>
</div>
<div class="r" style="left:21px;top:208px;width:137px;height:1px;background:#e4e4e4;"></div>
<div class="r" style="left:78px;top:193px;width:1px;height:16px;background:#e4e4e4;"></div>
<div class="r" style="left:21px;top:193px;width:56px;height:15px;overflow:hidden">
<span class="t" style="left:3.50px;top:-2.00px;font-size:11px;color:#808080;">Maximum</span>
</div>
<div class="r" style="left:79px;top:193px;width:79px;height:15px;overflow:hidden">
<span class="t" style="left:3.00px;top:-2.00px;font-size:11px;color:#808080;">801771.606843</span>
</div>
<div class="r" style="left:21px;top:224px;width:137px;height:1px;background:#e4e4e4;"></div>
<div class="r" style="left:78px;top:209px;width:1px;height:16px;background:#e4e4e4;"></div>
<div class="r" style="left:21px;top:209px;width:56px;height:15px;overflow:hidden">
<span class="t" style="left:3.50px;top:-2.00px;font-size:11px;color:#808080;">Spannweite</span>
</div>
<div class="r" style="left:79px;top:209px;width:79px;height:15px;overflow:hidden">
<span class="t" style="left:3.00px;top:-2.00px;font-size:11px;color:#808080;">447692.817997</span>
</div>
<div class="r" style="left:21px;top:240px;width:137px;height:1px;background:#e4e4e4;"></div>
<div class="r" style="left:78px;top:225px;width:1px;height:16px;background:#e4e4e4;"></div>
<div class="r" style="left:21px;top:225px;width:56px;height:15px;overflow:hidden">
<span class="t" style="left:3.50px;top:-2.00px;font-size:11px;color:#808080;">Modalwert</span>
</div>
<div class="r" style="left:79px;top:225px;width:79px;height:15px;overflow:hidden">
<span class="t" style="left:3.00px;top:-2.00px;font-size:11px;color:#808080;">490712.311222</span>
</div>
<div class="r" style="left:21px;top:256px;width:137px;height:1px;background:#e4e4e4;"></div>
<div class="r" style="left:78px;top:241px;width:1px;height:16px;background:#e4e4e4;"></div>
<div class="r" style="left:21px;top:241px;width:56px;height:15px;overflow:hidden">
<span class="t" style="left:3.50px;top:-2.00px;font-size:11px;color:#808080;">Standardabweichung</span>
</div>
<div class="r" style="left:79px;top:241px;width:79px;height:15px;overflow:hidden">
<span class="t" style="left:3.00px;top:-2.00px;font-size:11px;color:#808080;">81512.4640091</span>
</div>
<div class="r" style="left:0px;top:257px;width:158px;height:16px;background:#e9e9e9;"></div>
<svg class="r" style="left:5px;top:260px;" width="10" height="8" viewBox="0 0 10 8"><path d="M1 1.5L5 5.5L9 1.5" fill="none" stroke="#333" stroke-width="1.6"/></svg>
<span class="t" style="left:24.50px;top:255.00px;font-size:12px;color:#000;letter-spacing:-0.223px;font-weight:bold;">Z_Quantile</span>
<div class="r" style="left:21px;top:288px;width:137px;height:1px;background:#e4e4e4;"></div>
<div class="r" style="left:78px;top:273px;width:1px;height:16px;background:#e4e4e4;"></div>
<div class="r" style="left:21px;top:273px;width:56px;height:15px;overflow:hidden">
<span class="t" style="left:3.50px;top:-2.00px;font-size:11px;color:#808080;">1%-Perzentil</span>
</div>
<div class="r" style="left:79px;top:273px;width:79px;height:15px;overflow:hidden">
<span class="t" style="left:3.00px;top:-2.00px;font-size:11px;color:#808080;">400749.770762</span>
</div>
<div class="r" style="left:21px;top:304px;width:137px;height:1px;background:#e4e4e4;"></div>
<div class="r" style="left:78px;top:289px;width:1px;height:16px;background:#e4e4e4;"></div>
<div class="r" style="left:21px;top:289px;width:56px;height:15px;overflow:hidden">
<span class="t" style="left:3.50px;top:-2.00px;font-size:11px;color:#808080;">2%-Perzentil</span>
</div>
<div class="r" style="left:79px;top:289px;width:79px;height:15px;overflow:hidden">
<span class="t" style="left:3.00px;top:-2.00px;font-size:11px;color:#808080;">410259.931587</span>
</div>
<div class="r" style="left:21px;top:320px;width:137px;height:1px;background:#e4e4e4;"></div>
<div class="r" style="left:78px;top:305px;width:1px;height:16px;background:#e4e4e4;"></div>
<div class="r" style="left:21px;top:305px;width:56px;height:15px;overflow:hidden">
<span class="t" style="left:3.50px;top:-2.00px;font-size:11px;color:#808080;">3%-Perzentil</span>
</div>
<div class="r" style="left:79px;top:305px;width:79px;height:15px;overflow:hidden">
<span class="t" style="left:3.00px;top:-2.00px;font-size:11px;color:#808080;">416331.947919</span>
</div>
<div class="r" style="left:21px;top:336px;width:137px;height:1px;background:#e4e4e4;"></div>
<div class="r" style="left:78px;top:321px;width:1px;height:16px;background:#e4e4e4;"></div>
<div class="r" style="left:21px;top:321px;width:56px;height:15px;overflow:hidden">
<span class="t" style="left:3.50px;top:-2.00px;font-size:11px;color:#808080;">5%-Perzentil</span>
</div>
<div class="r" style="left:79px;top:321px;width:79px;height:15px;overflow:hidden">
<span class="t" style="left:3.00px;top:-2.00px;font-size:11px;color:#808080;">426164.150530</span>
</div>
<div class="r" style="left:21px;top:352px;width:137px;height:1px;background:#e4e4e4;"></div>
<div class="r" style="left:78px;top:337px;width:1px;height:16px;background:#e4e4e4;"></div>
<div class="r" style="left:21px;top:337px;width:56px;height:15px;overflow:hidden">
<span class="t" style="left:3.50px;top:-2.00px;font-size:11px;color:#808080;">10%-Perzentil</span>
</div>
<div class="r" style="left:79px;top:337px;width:79px;height:15px;overflow:hidden">
<span class="t" style="left:3.00px;top:-2.00px;font-size:11px;color:#808080;">442029.918401</span>
</div>
<div class="r" style="left:21px;top:368px;width:137px;height:1px;background:#e4e4e4;"></div>
<div class="r" style="left:78px;top:353px;width:1px;height:16px;background:#e4e4e4;"></div>
<div class="r" style="left:21px;top:353px;width:56px;height:15px;overflow:hidden">
<span class="t" style="left:3.50px;top:-2.00px;font-size:11px;color:#808080;">15%-Perzentil</span>
</div>
<div class="r" style="left:79px;top:353px;width:79px;height:15px;overflow:hidden">
<span class="t" style="left:3.00px;top:-2.00px;font-size:11px;color:#808080;">453430.533917</span>
</div>
<div class="r" style="left:21px;top:384px;width:137px;height:1px;background:#e4e4e4;"></div>
<div class="r" style="left:78px;top:369px;width:1px;height:16px;background:#e4e4e4;"></div>
<div class="r" style="left:21px;top:369px;width:56px;height:15px;overflow:hidden">
<span class="t" style="left:3.50px;top:-2.00px;font-size:11px;color:#808080;">20%-Perzentil</span>
</div>
<div class="r" style="left:79px;top:369px;width:79px;height:15px;overflow:hidden">
<span class="t" style="left:3.00px;top:-2.00px;font-size:11px;color:#808080;">463110.216387</span>
</div>
<div class="r" style="left:21px;top:400px;width:137px;height:1px;background:#e4e4e4;"></div>
<div class="r" style="left:78px;top:385px;width:1px;height:16px;background:#e4e4e4;"></div>
<div class="r" style="left:21px;top:385px;width:56px;height:15px;overflow:hidden">
<span class="t" style="left:3.50px;top:-2.00px;font-size:11px;color:#808080;">25%-Perzentil</span>
</div>
<div class="r" style="left:79px;top:385px;width:79px;height:15px;overflow:hidden">
<span class="t" style="left:3.00px;top:-2.00px;font-size:11px;color:#808080;">471866.860646</span>
</div>
</div>
<div class="r" style="left:1579px;top:812px;width:176px;height:1px;background:#a0a0a0;"></div>
<div class="r" style="left:1737px;top:417px;width:17px;height:396px;background:#f8f8f8;background-image:repeating-conic-gradient(#ffffff 0% 25%, #ededed 0% 50%);background-size:2px 2px;"></div>
<div class="r" style="left:1737px;top:417px;width:17px;height:17px;background:#f0f0f0;border-top:1px solid #fff;border-left:1px solid #fff;border-right:1px solid #696969;border-bottom:1px solid #696969;box-shadow:inset -1px -1px 0 #a0a0a0;"></div>
<svg class="r" style="left:1741px;top:422.5px;" width="8" height="5" viewBox="0 0 8 5"><path d="M0 4.5H8L4 0.3Z" fill="#000"/></svg>
<div class="r" style="left:1737px;top:442px;width:17px;height:200px;background:#f0f0f0;border-top:1px solid #fff;border-left:1px solid #fff;border-right:1px solid #696969;border-bottom:1px solid #696969;box-shadow:inset -1px -1px 0 #a0a0a0;"></div>
<div class="r" style="left:1737px;top:795px;width:17px;height:17px;background:#f0f0f0;border-top:1px solid #fff;border-left:1px solid #fff;border-right:1px solid #696969;border-bottom:1px solid #696969;box-shadow:inset -1px -1px 0 #a0a0a0;"></div>
<svg class="r" style="left:1741px;top:802px;" width="8" height="5" viewBox="0 0 8 5"><path d="M0 0.3H8L4 4.5Z" fill="#000"/></svg>
<div class="r" style="left:1579px;top:813px;width:176px;height:3px;background:#fbfbfb;"></div>
<div class="r" style="left:1579px;top:816px;width:176px;height:59px;background:#f0f0f0;border-top:1px solid #a0a0a0;border-left:1px solid #a0a0a0;"></div>
<span class="t" style="left:1584.00px;top:816.00px;font-size:12px;color:#000;letter-spacing:-0.171px;font-weight:bold;">Varianz</span>
<span class="t" style="left:1584.00px;top:831.00px;font-size:11px;color:#000;letter-spacing:0.123px;">Varianz der Verteilung</span>
<svg class="r" style="left:23px;top:9px;" width="16" height="16" viewBox="0 0 16 16"><path d="M9.5 14.5L12.8 1L15.5 8.5V14.5Z" fill="#c8c6c4" stroke="#8a8886" stroke-width="0.8"/><path d="M0.6 10L5.6 1L10.5 9.5" fill="#fff" stroke="#3b3a39" stroke-width="1"/><path d="M0.6 15.4V9.6L4 12.6L9.4 5.6L15.4 15.4Z" fill="#83beec" stroke="#1e78c8" stroke-width="1"/></svg>
<svg class="r" style="left:23px;top:41px;" width="16" height="16" viewBox="0 0 16 16"><path d="M0.5 0.5H10.5V3M0.5 0.5V10.5H4" fill="none" stroke="#3b3a39" stroke-width="1" stroke-dasharray="2.2 1.6"/><path d="M6 4H8V6H6ZM10 4H12V6H10ZM13.6 4H15.6V6H13.6Z" fill="#1e78c8"/><path d="M7 7.6V15.6M11 7.6V15.6M14.6 7.6V15.6" stroke="#3b3a39" stroke-width="1.1"/></svg>
<svg class="r" style="left:23px;top:73px;" width="16" height="16" viewBox="0 0 16 16"><path d="M5.5 0.9H9.2V4H13.3V8M5.5 0.9V4.6H1.4V11.8H5.6" fill="none" stroke="#3b3a39" stroke-width="1.1"/><path d="M15.2 6.6L9 12.4L10.6 13.8L15.8 7.4Z" fill="#fff" stroke="#3b3a39" stroke-width="0.9"/><path d="M9 12.2C7 12.2 6.6 14.6 4 15C6.4 16.2 10.2 15.8 10.6 13.6Z" fill="#1e78c8"/></svg>
<svg class="r" style="left:209px;top:9px;" width="17" height="17" viewBox="0 0 17 17"><path d="M8 1L15.3 6.3L12.5 15H3.5L0.7 6.3Z" fill="none" stroke="#1e8ad6" stroke-width="1.2"/><path d="M8 4.2L12.2 7.3L10.6 12.4H5.4L3.8 7.3Z" fill="none" stroke="#1e8ad6" stroke-width="1"/><path d="M8 0.5V9M8 9L1 6.5M8 9L15 6.5M8 9L2.6 15.6M8 9L13.4 15.6" stroke="#3b3a39" stroke-width="1" fill="none"/></svg>
<svg class="r" style="left:209px;top:41px;" width="17" height="17" viewBox="0 0 17 17"><path d="M1 15.6L8.6 8.2" stroke="#1e8ad6" stroke-width="1.4"/><path d="M10.8 0.8L12 4.6L15.8 5.8L12 7L10.8 10.8L9.6 7L5.8 5.8L9.6 4.6Z" fill="#fff" stroke="#1e8ad6" stroke-width="0.9"/><path d="M14.4 9.6L14.9 10.9L16.2 11.4L14.9 11.9L14.4 13.2L13.9 11.9L12.6 11.4L13.9 10.9Z" fill="#5aa9e6"/><path d="M12.6 13.2L13 14L13.8 14.4L13 14.8L12.6 15.6L12.2 14.8L11.4 14.4L12.2 14Z" fill="#5aa9e6"/></svg>
<svg class="r" style="left:209px;top:73px;" width="17" height="17" viewBox="0 0 17 17"><path d="M8 4L3.5 11M8 4L12.5 11" stroke="#3b3a39" stroke-width="1"/><path d="M8 0.19999999999999973L11.13 1.9999999999999998V5.6L8 7.4L4.87 5.6V1.9999999999999998Z" fill="#a743b8"/><path d="M6.8 3.1999999999999997H9.2V5.4H6.8Z" fill="none" stroke="#fff" stroke-opacity="0.75" stroke-width="0.6"/><path d="M3.4 8.8L6.53 10.6V14.200000000000001L3.4 16.0L0.27 14.200000000000001V10.6Z" fill="#2e8bd8"/><path d="M2.2 11.8H4.6V14.0H2.2Z" fill="none" stroke="#fff" stroke-opacity="0.75" stroke-width="0.6"/><path d="M13 8.8L16.13 10.6V14.200000000000001L13 16.0L9.87 14.200000000000001V10.6Z" fill="#f09231"/><path d="M11.8 11.8H14.2V14.0H11.8Z" fill="none" stroke="#fff" stroke-opacity="0.75" stroke-width="0.6"/></svg>
<svg class="r" style="left:373px;top:9px;" width="17" height="17" viewBox="0 0 17 17"><path d="M4 15.5H0.5V0.5H7.5L11.5 4.5V7.6" fill="none" stroke="#3b3a39" stroke-width="1"/><path d="M7.5 0.5V4.5H11.5" fill="none" stroke="#3b3a39" stroke-width="1"/><path d="M3.6 5.8h1.8v1h-1.8zM4.4 9h1.8v1h-1.8z" fill="#e8312f"/><path d="M3.2 11.8L6.8 15L13.9 8.2" fill="none" stroke="#21a04a" stroke-width="1.3"/></svg>
<svg class="r" style="left:373px;top:41px;" width="17" height="17" viewBox="0 0 17 17"><path d="M0.5 0.5H7.5L11.5 4.5V15.5H0.5Z" fill="#fdfdfd" stroke="#3b3a39" stroke-width="1"/><path d="M7.5 0.5V4.5H11.5" fill="none" stroke="#3b3a39" stroke-width="1"/><path d="M1.6 9L6.8 14.4M4.2 8.4L8.8 13" stroke="#e8312f" stroke-width="1.1"/><path d="M3.2 8.2L8 13.2" stroke="#3b3a39" stroke-width="1"/><path d="M6.4 8.2L8 6.4L9.8 8V10.2H7.8Z" fill="#e8312f"/></svg>
<svg class="r" style="left:371px;top:73px;" width="17" height="17" viewBox="0 0 17 17"><path d="M0.5 0.5V15.5H16" fill="none" stroke="#3b3a39" stroke-width="1"/><path d="M2.5 14C9 13.4 13 9 15 2.6" fill="none" stroke="#1e8ad6" stroke-width="1.2"/><path d="M3.6 10.6h1.3v1.3h-1.3zM6 8h1.3v1.3H6zM9.6 5.2h1.3v1.3H9.6zM11.6 1.4h1.3v1.3h-1.3zM11 12.6h1.3v1.3H11zM13.6 9.6h1.3v1.3h-1.3z" fill="#3b3a39"/></svg>
<svg class="r" style="left:552px;top:9px;" width="13" height="17" viewBox="0 0 13 17"><rect x="0.6" y="0.6" width="11.2" height="15" rx="0.8" fill="#fdfdfd" stroke="#3b3a39" stroke-width="1.2"/><path d="M0.6 12.6H11.8" stroke="#3b3a39" stroke-width="1.1"/><path d="M3 3.6V9.4C3 10.4 9.4 10.4 9.4 9.4V3.6" fill="#d6f0dc" stroke="#21a04a" stroke-width="1"/><ellipse cx="6.2" cy="3.6" rx="3.2" ry="1.2" fill="#d6f0dc" stroke="#21a04a" stroke-width="1"/><path d="M3 6.5C3 7.5 9.4 7.5 9.4 6.5" fill="none" stroke="#21a04a" stroke-width="0.9"/></svg>
<svg class="r" style="left:552px;top:41px;" width="13" height="17" viewBox="0 0 13 17"><rect x="0.6" y="0.6" width="11.2" height="15" rx="0.8" fill="#fdfdfd" stroke="#3b3a39" stroke-width="1.2"/><path d="M0.6 12.6H11.8" stroke="#3b3a39" stroke-width="1.1"/><path d="M6.2 2.6L7.3 5.4H10.2L7.9 7.2L8.8 10L6.2 8.3L3.6 10L4.5 7.2L2.2 5.4H5.1Z" fill="#fff" stroke="#1e78c8" stroke-width="1"/></svg>
<svg class="r" style="left:552px;top:73px;" width="13" height="17" viewBox="0 0 13 17"><rect x="0.6" y="0.6" width="11.2" height="15" rx="0.8" fill="#fdfdfd" stroke="#3b3a39" stroke-width="1.2"/><path d="M0.6 12.6H11.8" stroke="#3b3a39" stroke-width="1.1"/><ellipse cx="6.2" cy="6.4" rx="2.5" ry="3.9" fill="none" stroke="#2fb56a" stroke-width="1.1"/><path d="M3.7 6.4H8.7" stroke="#2fb56a" stroke-width="1"/></svg>
<svg class="r" style="left:1027px;top:9px;" width="17" height="17" viewBox="0 0 17 17"><path d="M3 15.5H0.5V0.5H15.5V5.6" fill="none" stroke="#3b3a39" stroke-width="1"/><path d="M9.4 1.9L12.79 3.8499999999999996V7.75L9.4 9.7L6.01 7.75V3.8499999999999996Z" fill="#a743b8"/><path d="M8.200000000000001 5.2H10.6V7.4H8.200000000000001Z" fill="none" stroke="#fff" stroke-opacity="0.75" stroke-width="0.6"/><path d="M5.6 8.5L8.91 10.4V14.200000000000001L5.6 16.1L2.29 14.200000000000001V10.4Z" fill="#2e8bd8"/><path d="M4.3999999999999995 11.700000000000001H6.8V13.9H4.3999999999999995Z" fill="none" stroke="#fff" stroke-opacity="0.75" stroke-width="0.6"/><path d="M12.7 8.5L16.01 10.4V14.200000000000001L12.7 16.1L9.39 14.200000000000001V10.4Z" fill="#f09231"/><path d="M11.5 11.700000000000001H13.899999999999999V13.9H11.5Z" fill="none" stroke="#fff" stroke-opacity="0.75" stroke-width="0.6"/></svg>
<svg class="r" style="left:1027px;top:41px;" width="17" height="17" viewBox="0 0 17 17"><path d="M0.6 6C3.6 6 4.6 2.4 7.6 2.4S11 4.6 15.6 2.6M0.6 10.6C3.6 10.6 5.4 6.4 8.4 6.4S11.8 7.4 15.6 6" fill="none" stroke="#b8b6b4" stroke-width="1"/><path d="M9.6 9.6L15.4 15.4M15.4 9.6L9.6 15.4" stroke="#b8b6b4" stroke-width="1.1"/></svg>
<svg class="r" style="left:1027px;top:73px;" width="17" height="17" viewBox="0 0 17 17"><path d="M2.6 2.2V15M0.4 12.6L2.6 15.2L4.8 12.6M2.6 2.2H13.6M11.4 0.2L13.8 2.2L11.4 4.4" fill="none" stroke="#1e8ad6" stroke-width="1.1"/><path d="M5 4.4L8.2 7.6M8.4 4.6V7.8H5.2" fill="none" stroke="#1e8ad6" stroke-width="1.1"/><path d="M9.4 9.4L15.6 15.6M15.6 9.4L9.4 15.6" stroke="#e8312f" stroke-width="1.3"/></svg>
<svg class="r" style="left:1340px;top:74px;" width="17" height="15" viewBox="0 0 17 15"><path d="M7 1H0.8V7M0.8 7.4V13.6H7M7 1V3M7 11.6V13.6M0.8 7.2H3" fill="none" stroke="#3b3a39" stroke-width="1.1"/><path d="M2 7.2H7.6M5.6 5L7.8 7.2L5.6 9.4" fill="none" stroke="#1e8ad6" stroke-width="1.1"/><rect x="9.8" y="4.8" width="6" height="4.6" fill="#fff" stroke="#1e78c8" stroke-width="1.2"/><path d="M11.4 7.1H14.2" stroke="#3b3a39" stroke-width="1"/></svg>
<svg class="r" style="left:1534px;top:6px;" width="35" height="35" viewBox="0 0 35 35"><rect x="20.4" y="10.4" width="1.2" height="1.2" fill="#2a56c6"/><rect x="19.4" y="12.9" width="1.2" height="1.2" fill="#2a56c6"/><rect x="21.4" y="16.9" width="1.2" height="1.2" fill="#2a56c6"/><rect x="19.9" y="18.9" width="1.2" height="1.2" fill="#2a56c6"/><rect x="18.9" y="19.9" width="1.2" height="1.2" fill="#e6332a"/><rect x="23.9" y="22.9" width="1.2" height="1.2" fill="#2a56c6"/><rect x="22.9" y="24.4" width="1.2" height="1.2" fill="#2a56c6"/><rect x="13.9" y="17.9" width="1.2" height="1.2" fill="#3cb44b"/><rect x="12.4" y="20.4" width="1.2" height="1.2" fill="#3cb44b"/><rect x="16.9" y="18.9" width="1.2" height="1.2" fill="#3cb44b"/><rect x="11.9" y="22.4" width="1.2" height="1.2" fill="#3cb44b"/><rect x="17.4" y="23.4" width="1.2" height="1.2" fill="#3cb44b"/><rect x="15.9" y="23.9" width="1.2" height="1.2" fill="#3cb44b"/><rect x="10.4" y="24.4" width="1.2" height="1.2" fill="#cfe8c6"/><rect x="13.4" y="23.9" width="1.2" height="1.2" fill="#f09231"/><rect x="14.4" y="24.9" width="1.2" height="1.2" fill="#e6332a"/><rect x="22.4" y="21.9" width="1.2" height="1.2" fill="#f09231"/><rect x="24.9" y="23.9" width="1.2" height="1.2" fill="#f09231"/><rect x="18.9" y="21.4" width="1.2" height="1.2" fill="#f09231"/><rect x="16.4" y="21.9" width="1.2" height="1.2" fill="#e6332a"/></svg>
<svg class="r" style="left:1684px;top:6px;" width="35" height="35" viewBox="0 0 35 35"><rect x="20.4" y="10.4" width="1.2" height="1.2" fill="#2a56c6"/><rect x="19.4" y="12.9" width="1.2" height="1.2" fill="#2a56c6"/><rect x="21.4" y="16.9" width="1.2" height="1.2" fill="#2a56c6"/><rect x="19.9" y="18.9" width="1.2" height="1.2" fill="#2a56c6"/><rect x="18.9" y="19.9" width="1.2" height="1.2" fill="#e6332a"/><rect x="23.9" y="22.9" width="1.2" height="1.2" fill="#2a56c6"/><rect x="22.9" y="24.4" width="1.2" height="1.2" fill="#2a56c6"/><rect x="13.9" y="17.9" width="1.2" height="1.2" fill="#3cb44b"/><rect x="12.4" y="20.4" width="1.2" height="1.2" fill="#3cb44b"/><rect x="16.9" y="18.9" width="1.2" height="1.2" fill="#3cb44b"/><rect x="11.9" y="22.4" width="1.2" height="1.2" fill="#3cb44b"/><rect x="17.4" y="23.4" width="1.2" height="1.2" fill="#3cb44b"/><rect x="15.9" y="23.9" width="1.2" height="1.2" fill="#3cb44b"/><rect x="10.4" y="24.4" width="1.2" height="1.2" fill="#cfe8c6"/><rect x="13.4" y="23.9" width="1.2" height="1.2" fill="#f09231"/><rect x="14.4" y="24.9" width="1.2" height="1.2" fill="#e6332a"/><rect x="22.4" y="21.9" width="1.2" height="1.2" fill="#f09231"/><rect x="24.9" y="23.9" width="1.2" height="1.2" fill="#f09231"/><rect x="18.9" y="21.4" width="1.2" height="1.2" fill="#f09231"/><rect x="16.4" y="21.9" width="1.2" height="1.2" fill="#e6332a"/></svg>
<svg class="r" style="left:1614px;top:8px;" width="36" height="32" viewBox="0 0 36 32"><path d="M8.4 5V2.4H21.6L28 8.8V17M8.4 24V29H13" fill="none" stroke="#3b3a39" stroke-width="1.1"/><path d="M21.6 2.4V8.8H28" fill="none" stroke="#3b3a39" stroke-width="1"/><path d="M9 3H21.4V9H27.6V20L19 28.6H9Z" fill="#fbfbfb"/><rect x="2.8" y="6.8" width="14.4" height="14.6" fill="#fff" stroke="#1a7a43" stroke-width="1.8"/><rect x="4.6" y="9.2" width="10.8" height="9.6" fill="#1a7a43"/><path d="M6.4 10.4L13.4 17.6M13.4 10.4L6.4 17.6" stroke="#d8eedf" stroke-width="1.6"/><path d="M13 24.4L19.4 30.4L33.6 17.4" fill="none" stroke="#21a04a" stroke-width="1.4"/></svg>
</body></html>
